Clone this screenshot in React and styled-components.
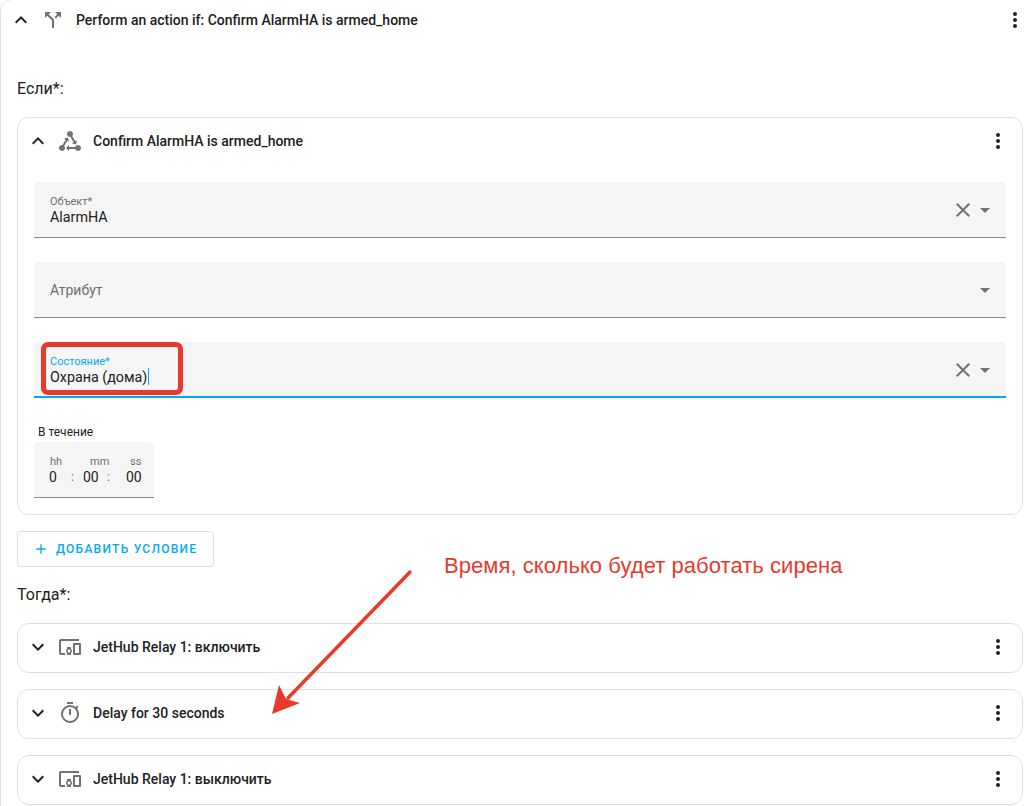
import React from 'react';
import styled, { createGlobalStyle } from 'styled-components';

const P = {
  up: 'M7.41,15.41L12,10.83L16.59,15.41L18,14L12,8L6,14L7.41,15.41Z',
  down: 'M7.41,8.58L12,13.17L16.59,8.58L18,10L12,16L6,10L7.41,8.58Z',
  dots: 'M12,16A2,2 0 0,1 14,18A2,2 0 0,1 12,20A2,2 0 0,1 10,18A2,2 0 0,1 12,16M12,10A2,2 0 0,1 14,12A2,2 0 0,1 12,14A2,2 0 0,1 10,12A2,2 0 0,1 12,10M12,4A2,2 0 0,1 14,6A2,2 0 0,1 12,8A2,2 0 0,1 10,6A2,2 0 0,1 12,4Z',
  split: 'M14,4L16.29,6.29L13.41,9.17L14.83,10.59L17.71,7.71L20,10V4M10,4H4V10L6.29,7.71L11,12.41V20H13V11.59L7.71,6.29',
  close: 'M19,6.41L17.59,5L12,10.59L6.41,5L5,6.41L10.59,12L5,17.59L6.41,19L12,13.41L17.59,19L19,17.59L13.41,12L19,6.41Z',
  timer: 'M12,20A7,7 0 0,1 5,13A7,7 0 0,1 12,6A7,7 0 0,1 19,13A7,7 0 0,1 12,20M19.03,7.39L20.45,5.97C20,5.46 19.55,5 19.04,4.56L17.62,6C16.07,4.74 14.12,4 12,4A9,9 0 0,0 3,13A9,9 0 0,0 12,22C17,22 21,17.97 21,13C21,10.88 20.26,8.93 19.03,7.39M11,14H13V8H11M15,1H9V3H15V1Z',
  state: 'M6.27 17.05C6.72 17.58 7 18.25 7 19C7 20.66 5.66 22 4 22S1 20.66 1 19 2.34 16 4 16C4.18 16 4.36 16 4.53 16.05L7.6 10.69L5.86 9.7L9.95 8.58L11.07 12.67L9.33 11.68L6.27 17.05M20 16C18.7 16 17.6 16.84 17.18 18H11V16L8 19L11 22V20H17.18C17.6 21.16 18.7 22 20 22C21.66 22 23 20.66 23 19S21.66 16 20 16M12 8C12.18 8 12.36 8 12.53 7.95L15.6 13.31L13.86 14.3L17.95 15.42L19.07 11.33L17.33 12.32L14.27 6.95C14.72 6.42 15 5.75 15 5C15 3.34 13.66 2 12 2S9 3.34 9 5 10.34 8 12 8Z',
  devices: 'M3 6H21V4H3C1.9 4 1 4.9 1 6V18C1 19.1 1.9 20 3 20H7V18H3V6M13 12H9V13.78C8.39 14.33 8 15.11 8 16C8 16.89 8.39 17.67 9 18.22V20H13V18.22C13.61 17.67 14 16.88 14 16S13.61 14.33 13 13.78V12M11 17.5C10.17 17.5 9.5 16.83 9.5 16S10.17 14.5 11 14.5 12.5 15.17 12.5 16 11.83 17.5 11 17.5M22 8H16C15.5 8 15 8.5 15 9V19C15 19.5 15.5 20 16 20H22C22.5 20 23 19.5 23 19V9C23 8.5 22.5 8 22 8M21 18H17V10H21V18Z',
  plus: 'M19,13H13V19H11V13H5V11H11V5H13V11H19V13Z',
  caret: 'M7,10L12,15L17,10H7Z',
};

const Global = createGlobalStyle`
  html, body { margin: 0; padding: 0; background: #fff; overflow: hidden; height: 806px; }
  body { font-family: Roboto, "Noto Sans", sans-serif; color: #212121; }
`;

const Page = styled.div`
  position: relative;
  width: 1028px;
  height: 806px;
  overflow: hidden;
`;

const Outer = styled.section`
  width: 1040px;
  box-sizing: border-box;
  border: 1px solid #e0e0e0;
  border-radius: 12px;
  padding: 0 16px;
  height: 830px;
  margin-top: -1px;
`;

const OuterHeader = styled.header`
  display: flex;
  align-items: center;
  height: 39px;
  margin: 0 -16px;
  padding: 0 12px 0 8px;
`;

const Glyph = styled.svg`
  flex: none;
  width: ${p => p.$size || 24}px;
  height: ${p => p.$size || 24}px;
  fill: ${p => p.$color || '#727272'};
  display: block;
`;

const Title = styled.span`
  font-size: 14px;
  font-weight: 500;
  color: #212121;
  flex: 1;
  white-space: nowrap;
`;

const ChevronSlot = styled.span`
  flex: none;
  width: 24px;
  display: flex;
  justify-content: center;
`;

const TypeIconSlot = styled.span`
  flex: none;
  display: flex;
  justify-content: center;
  width: 24px;
  margin: 0 ${p => p.$after}px 0 ${p => p.$before}px;
`;

const SectionLabel = styled.div`
  font-size: 16px;
  line-height: 20px;
  color: #212121;
  margin-top: ${p => p.$top}px;
`;

const Card = styled.div`
  box-sizing: border-box;
  border: 1px solid #e0e0e0;
  border-radius: 12px;
  background: #fff;
  margin-top: ${p => p.$top}px;
`;

const CardHeader = styled.div`
  display: flex;
  align-items: center;
  height: 46px;
  padding: 0 12px ${p => (p.$open ? 0 : 2)}px 8px;
`;

const CardBody = styled.div`
  padding: 18px 16px 16px;
  display: flex;
  flex-direction: column;
`;

const Field = styled.div`
  box-sizing: border-box;
  height: 56px;
  margin-bottom: 24px;
  background: #f5f5f5;
  border-radius: 4px 4px 0 0;
  border-bottom: ${p => (p.$active ? '2px solid #03a9f4' : '1px solid #8c8c8c')};
  display: flex;
  align-items: center;
  padding: 0 9px 0 16px;
`;

const FieldText = styled.div`
  flex: 1;
  height: 54px;
  align-self: flex-start;
  display: flex;
  flex-direction: column;
  justify-content: center;
`;

const FloatLabel = styled.div`
  font-size: 11px;
  line-height: 13px;
  margin-top: 3px;
  color: ${p => (p.$active ? '#03a9f4' : '#6f6f6f')};
`;

const Value = styled.div`
  font-size: 14.3px;
  line-height: 18px;
  color: #212121;
`;

const Placeholder = styled.div`
  flex: 1;
  font-size: 14px;
  color: #6f6f6f;
`;

const Caret = styled.span`
  display: inline-block;
  width: 1px;
  height: 17px;
  margin-left: 1px;
  vertical-align: -3px;
  background: #03a9f4;
`;

const FieldIcons = styled.div`
  display: flex;
  align-items: center;
  margin-top: 1px;
`;

const CaretIcon = styled.span`
  display: block;
  margin-left: -2px;
`;

const TimeLabel = styled.div`
  font-size: 12px;
  line-height: 16px;
  color: #212121;
  margin: 2px 0 2px 4px;
`;

const TimeBox = styled.div`
  box-sizing: border-box;
  width: 120px;
  height: 56px;
  background: #f5f5f5;
  border-radius: 4px 4px 0 0;
  border-bottom: 1px solid #8c8c8c;
  padding: 12px 0 0 0;
`;

const TimeHeads = styled.div`
  display: grid;
  grid-template-columns: 40px 40px auto;
  padding-left: 16px;
  font-size: 11px;
  line-height: 15px;
  color: #6f6f6f;
`;

const TimeNums = styled.div`
  display: grid;
  grid-template-columns: 22px 12px 24px 19px auto;
  padding-left: 15px;
  font-size: 14px;
  line-height: 16px;
  color: #212121;
`;

const TimeColon = styled.span`
  font-size: 12px;
  color: #6f6f6f;
`;

const AddButton = styled.button`
  display: flex;
  align-items: center;
  box-sizing: border-box;
  width: 197px;
  height: 36px;
  margin-top: 16px;
  padding: 0 0 0 15px;
  background: #fff;
  border: 1px solid #e0e0e0;
  border-radius: 4px;
  color: #03a9f4;
  font-family: inherit;
  font-size: 12px;
  font-weight: 500;
  letter-spacing: 1.25px;
  text-transform: uppercase;
  gap: 7px;
`;

const Note = styled.div`
  position: absolute;
  left: 444px;
  top: 554px;
  font-family: "Liberation Sans", Arial, sans-serif;
  font-size: 22px;
  letter-spacing: 0.05px;
  line-height: 24px;
  color: #e8392d;
  white-space: nowrap;
`;

const Highlight = styled.div`
  position: absolute;
  left: 41px;
  top: 342px;
  width: 142px;
  height: 53px;
  box-sizing: border-box;
  border: 5px solid #e8392d;
  border-radius: 7px;
`;

const ArrowLayer = styled.svg`
  position: absolute;
  left: 0;
  top: 0;
  pointer-events: none;
`;

const Icon = ({ d, size, color }) => (
  <Glyph viewBox="0 0 24 24" $size={size} $color={color}><path d={d} /></Glyph>
);

const RowHead = ({ open, icon, title }) => (
  <CardHeader $open={open}>
    <ChevronSlot><Icon d={open ? P.up : P.down} color="#212121" /></ChevronSlot>
    <TypeIconSlot $before={8} $after={11}><Icon d={icon} /></TypeIconSlot>
    <Title>{title}</Title>
    <Icon d={P.dots} color="#212121" />
  </CardHeader>
);

const Clearable = () => (
  <FieldIcons>
    <Icon d={P.close} />
    <CaretIcon><Icon d={P.caret} /></CaretIcon>
  </FieldIcons>
);

export default function App() {
  return (
    <Page>
      <Global />
      <Outer>
        <OuterHeader>
          <ChevronSlot><Icon d={P.up} color="#212121" /></ChevronSlot>
          <TypeIconSlot $before={8} $after={11}><Icon d={P.split} /></TypeIconSlot>
          <Title>Perform an action if: Confirm AlarmHA is armed_home</Title>
          <Icon d={P.dots} color="#212121" />
        </OuterHeader>
        <SectionLabel $top={40}>Если*:</SectionLabel>
        <Card $top={18}>
          <RowHead open icon={P.state} title="Confirm AlarmHA is armed_home" />
          <CardBody>
            <Field>
              <FieldText>
                <FloatLabel>Объект*</FloatLabel>
                <Value>AlarmHA</Value>
              </FieldText>
              <Clearable />
            </Field>
            <Field>
              <Placeholder>Атрибут</Placeholder>
              <FieldIcons><Icon d={P.caret} /></FieldIcons>
            </Field>
            <Field $active>
              <FieldText>
                <FloatLabel $active>Состояние*</FloatLabel>
                <Value>Охрана (дома)<Caret /></Value>
              </FieldText>
              <Clearable />
            </Field>
            <TimeLabel>В течение</TimeLabel>
            <TimeBox>
              <TimeHeads>
                <span>hh</span>
                <span>mm</span>
                <span>ss</span>
              </TimeHeads>
              <TimeNums>
                <span>0</span>
                <TimeColon>:</TimeColon>
                <span>00</span>
                <TimeColon>:</TimeColon>
                <span>00</span>
              </TimeNums>
            </TimeBox>
          </CardBody>
        </Card>
        <AddButton>
          <Icon d={P.plus} size={16} color="#03a9f4" />
          Добавить условие
        </AddButton>
        <SectionLabel $top={18}>Тогда*:</SectionLabel>
        <Card $top={18}><RowHead icon={P.devices} title="JetHub Relay 1: включить" /></Card>
        <Card $top={16}><RowHead icon={P.timer} title="Delay for 30 seconds" /></Card>
        <Card $top={16}><RowHead icon={P.devices} title="JetHub Relay 1: выключить" /></Card>
      </Outer>
      <Highlight />
      <Note>Время, сколько будет работать сирена</Note>
      <ArrowLayer width="1028" height="806" viewBox="0 0 1028 806">
        <path d="M410 572L288 698" stroke="#e8392d" strokeWidth="3.5" strokeLinecap="round" fill="none" />
        <path d="M272 714L279 685L286 699L300 703Z" fill="#e8392d" />
      </ArrowLayer>
    </Page>
  );
}
